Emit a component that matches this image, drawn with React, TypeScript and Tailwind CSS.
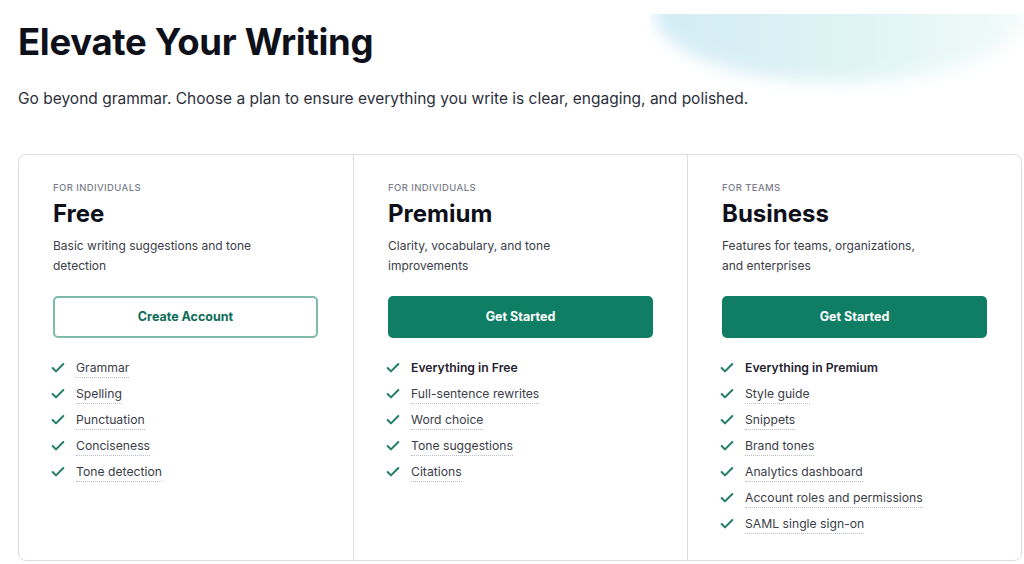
import { Check } from "lucide-react"

type Plan = {
  audience: string
  name: string
  description: string[]
  cta: string
  primary: boolean
  features: { label: string; bold?: boolean }[]
}

const plans: Plan[] = [
  {
    audience: "For individuals",
    name: "Free",
    description: ["Basic writing suggestions and tone", "detection"],
    cta: "Create Account",
    primary: false,
    features: [
      { label: "Grammar" },
      { label: "Spelling" },
      { label: "Punctuation" },
      { label: "Conciseness" },
      { label: "Tone detection" },
    ],
  },
  {
    audience: "For individuals",
    name: "Premium",
    description: ["Clarity, vocabulary, and tone", "improvements"],
    cta: "Get Started",
    primary: true,
    features: [
      { label: "Everything in Free", bold: true },
      { label: "Full-sentence rewrites" },
      { label: "Word choice" },
      { label: "Tone suggestions" },
      { label: "Citations" },
    ],
  },
  {
    audience: "For teams",
    name: "Business",
    description: ["Features for teams, organizations,", "and enterprises"],
    cta: "Get Started",
    primary: true,
    features: [
      { label: "Everything in Premium", bold: true },
      { label: "Style guide" },
      { label: "Snippets" },
      { label: "Brand tones" },
      { label: "Analytics dashboard" },
      { label: "Account roles and permissions" },
      { label: "SAML single sign-on" },
    ],
  },
]

export default function App() {
  return (
    <div className="relative h-[564px] w-[1024px] overflow-hidden bg-white font-['Inter',_'Noto_Sans',_sans-serif] text-[#0e101a]">
      {/* Decorative gradient blob */}
      <div className="absolute left-[650px] top-[14px] h-[90px] w-[374px] overflow-hidden">
        <div className="absolute -top-[72px] left-[4px] h-[140px] w-[370px] rounded-[50%] bg-gradient-to-r from-[#cbe9f4] via-[#d8f1f3] to-[#f0fbf8] opacity-85 blur-[8px]" />
      </div>

      <div className="relative px-[18px] pt-[20px]">
        <h1 className="text-[36.5px] font-bold leading-[44px] tracking-[-0.3px]">Elevate Your Writing</h1>
        <p className="mt-[24px] text-[15.5px] leading-[22px] text-[#2c2f3a]">
          Go beyond grammar. Choose a plan to ensure everything you write is clear, engaging, and polished.
        </p>

        <div className="mt-[44px] grid h-[407px] w-[1004px] grid-cols-3 rounded-[8px] border border-[#dcdde3]">
          {plans.map((plan, i) => (
            <div key={plan.name} className={`pl-[34px] pr-[34px] pt-[27px] ${i > 0 ? "border-l border-[#dcdde3]" : ""}`}>
              <div className="text-[9.5px] font-medium uppercase leading-[12px] tracking-[0.4px] text-[#7b7e8a]">
                {plan.audience}
              </div>
              <div className="mt-[5px] text-[24px] font-bold leading-[30px]">{plan.name}</div>
              <p className="mt-[7px] text-[12px] leading-[19.5px] text-[#3a3d48]">
                {plan.description[0]}
                <br />
                {plan.description[1]}
              </p>
              <button
                className={`mt-[21px] flex h-[42px] w-[265px] items-center justify-center rounded-[5px] text-[12.5px] font-bold ${
                  plan.primary
                    ? "bg-[#0f7e65] text-white"
                    : "border-2 border-solid border-[#7fb9aa] bg-white text-[#0d6b57]"
                }`}
              >
                {plan.cta}
              </button>
              <ul className="mt-[20px] flex flex-col gap-[6px]">
                {plan.features.map((f) => (
                  <li key={f.label} className="flex h-[20px] items-center">
                    <Check className="-ml-[3px] h-[16px] w-[16px] text-[#237d67]" strokeWidth={3} />
                    <span
                      className={`ml-[10px] text-[12.2px] leading-[18px] ${
                        f.bold
                          ? "font-semibold text-[#1f2230]"
                          : "border-b border-dotted border-[#b9bccb] text-[#3a3d48]"
                      }`}
                    >
                      {f.label}
                    </span>
                  </li>
                ))}
              </ul>
            </div>
          ))}
        </div>
      </div>
    </div>
  )
}
